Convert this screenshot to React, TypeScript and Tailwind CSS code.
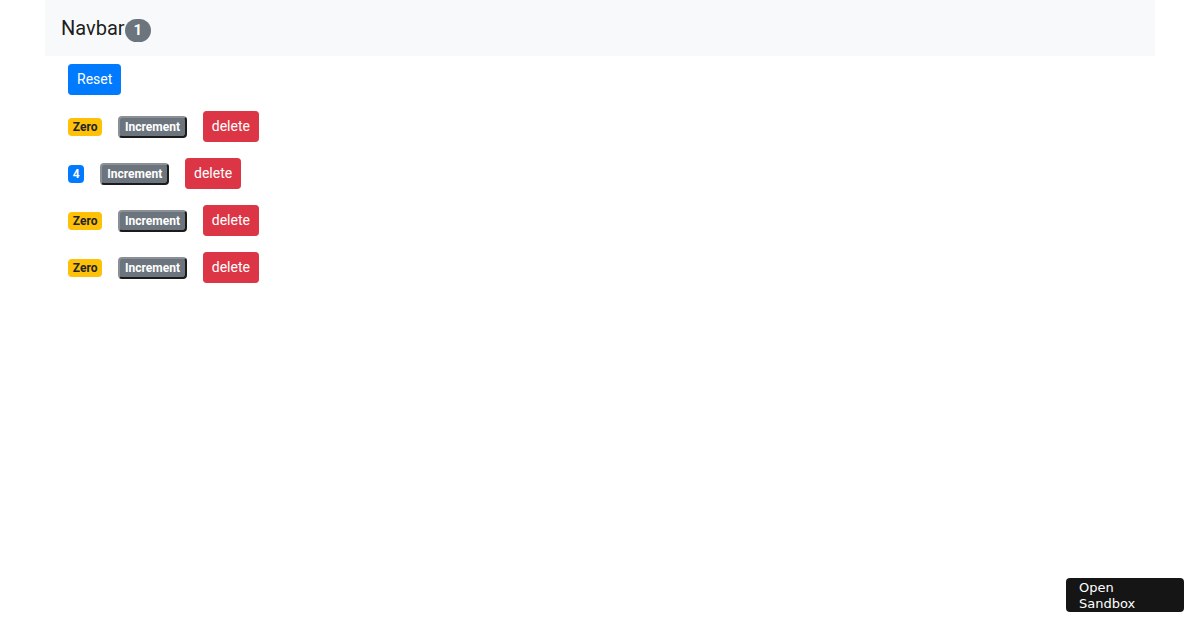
import React from "react";

const counters = [
  { id: 1, value: 0 },
  { id: 2, value: 4 },
  { id: 3, value: 0 },
  { id: 4, value: 0 },
];

const Counter: React.FC<{ value: number }> = ({ value }) => {
  const zero = value === 0;
  return (
    <div className="flex items-center">
      <span
        className={
          zero
            ? "m-2 rounded-[4px] bg-[#ffc107] px-[4.8px] pt-[3px] pb-[3px] text-[12px] font-bold leading-none text-[#212529]"
            : "m-2 rounded-[4px] bg-[#007bff] px-[4.8px] pt-[3px] pb-[3px] text-[12px] font-bold leading-none text-white"
        }
      >
        {zero ? "Zero" : value}
      </span>
      <button
        type="button"
        className="m-2 rounded-[4px] border-2 border-[#8a9096] border-r-[#1b1b1b] border-b-[#1b1b1b] bg-[#6c757d] px-[4.8px] py-[3px] text-[12px] font-bold leading-none text-white"
      >
        Increment
      </button>
      <button
        type="button"
        className="m-2 rounded-[3.2px] border border-[#dc3545] bg-[#dc3545] px-2 py-1 text-[14px] leading-[21px] text-white"
      >
        delete
      </button>
    </div>
  );
};

export default function App() {
  const total = counters.filter((c) => c.value > 0).length;
  return (
    <div className="relative min-h-[630px] bg-white font-['Roboto',sans-serif] text-[#212529]">
      <div className="mx-auto w-[1140px] px-[15px]">
        <nav className="flex items-center bg-[#f8f9fa] px-4 py-2">
          <a className="py-[5px] text-[20px] leading-[30px] text-black/90">
            Navbar
            <span className="inline-block rounded-full bg-[#6c757d] px-[9px] py-[3.75px] align-baseline text-[15px] font-bold leading-none text-white">
              {total}
            </span>
          </a>
        </nav>
        <main className="px-[15px]">
          <button
            type="button"
            className="m-2 rounded-[3.2px] border border-[#007bff] bg-[#007bff] px-2 py-1 text-[14px] leading-[21px] text-white"
          >
            Reset
          </button>
          {counters.map((c) => (
            <Counter key={c.id} value={c.value} />
          ))}
        </main>
      </div>

      <div className="absolute right-4 bottom-[18px] w-[118px] rounded-[4px] bg-[#151515] px-[13px] pt-[2px] pb-0 font-['DejaVu_Sans',sans-serif] text-[13px] leading-[16px] text-white">
        Open
        <br />
        Sandbox
      </div>
    </div>
  );
}
